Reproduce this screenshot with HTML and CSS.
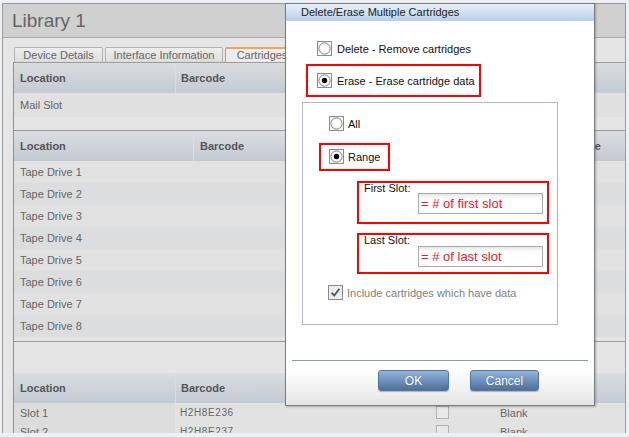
FILE: index.html
```html
<!DOCTYPE html>
<html lang="en">
<head>
    <meta charset="UTF-8">
    <title>Library 1</title>
    <link rel="stylesheet" href="styles.css">
</head>
<body>
    <div class="page">
        <div class="title">Library 1</div>
        <div class="content">
            <div class="tabs">
                <div class="tab tab-device">Device Details</div>
                <div class="tab tab-iface">Interface Information</div>
                <div class="tab tab-cart active">Cartridges</div>
            </div>
            <div class="panel">
                <div class="grid mail">
                    <div class="row head">
                        <div class="cell loc">Location</div>
                        <div class="cell code">Barcode</div>
                    </div>
                    <div class="row mail-row">
                        <div class="cell loc">Mail Slot</div>
                    </div>
                </div>

                <div class="grid drives">
                    <div class="row head">
                        <div class="cell loc">Location</div>
                        <div class="cell code">Barcode</div>
                        <div class="cell state">State</div>
                    </div>
                    <div class="row"><div class="cell loc">Tape Drive 1</div></div>
                    <div class="row"><div class="cell loc">Tape Drive 2</div></div>
                    <div class="row"><div class="cell loc">Tape Drive 3</div></div>
                    <div class="row"><div class="cell loc">Tape Drive 4</div></div>
                    <div class="row"><div class="cell loc">Tape Drive 5</div></div>
                    <div class="row"><div class="cell loc">Tape Drive 6</div></div>
                    <div class="row"><div class="cell loc">Tape Drive 7</div></div>
                    <div class="row"><div class="cell loc">Tape Drive 8</div></div>
                </div>

                <div class="grid slots">
                    <div class="row head">
                        <div class="cell loc">Location</div>
                        <div class="cell code">Barcode</div>
                    </div>
                    <div class="row">
                        <div class="cell loc">Slot 1</div>
                        <div class="cell code mono">H2H8E236</div>
                        <div class="cell pick"><span class="box"></span></div>
                        <div class="cell kind">Blank</div>
                    </div>
                    <div class="row">
                        <div class="cell loc">Slot 2</div>
                        <div class="cell code mono">H2H8E237</div>
                        <div class="cell pick"><span class="box"></span></div>
                        <div class="cell kind">Blank</div>
                    </div>
                </div>
            </div>
        </div>
    </div>

    <div class="dialog">
        <div class="dialog-title">Delete/Erase Multiple Cartridges</div>
        <div class="dialog-body">
            <div class="option opt-delete">
                <svg class="radio" width="15" height="15" viewBox="0 0 15 15"><rect x="0.5" y="0.5" width="14" height="14" fill="#fff" stroke="#8c8c8c"/><circle cx="7.5" cy="7.5" r="5.6" fill="#fff" stroke="#7d7d7d"/></svg>
                <span>Delete - Remove cartridges</span>
            </div>
            <div class="mark opt-erase">
                <div class="option">
                    <svg class="radio" width="15" height="15" viewBox="0 0 15 15"><rect x="0.5" y="0.5" width="14" height="14" fill="#fff" stroke="#8c8c8c"/><circle cx="7.5" cy="7.5" r="5.6" fill="#fff" stroke="#7d7d7d"/><circle cx="7.5" cy="7.5" r="2.7" fill="#000"/></svg>
                    <span>Erase - Erase cartridge data</span>
                </div>
            </div>

            <div class="group">
                <div class="option opt-all">
                    <svg class="radio" width="15" height="15" viewBox="0 0 15 15"><rect x="0.5" y="0.5" width="14" height="14" fill="#fff" stroke="#8c8c8c"/><circle cx="7.5" cy="7.5" r="5.6" fill="#fff" stroke="#7d7d7d"/></svg>
                    <span>All</span>
                </div>
                <div class="mark opt-range">
                    <div class="option">
                        <svg class="radio" width="15" height="15" viewBox="0 0 15 15"><rect x="0.5" y="0.5" width="14" height="14" fill="#fff" stroke="#8c8c8c"/><circle cx="7.5" cy="7.5" r="5.6" fill="#fff" stroke="#7d7d7d"/><circle cx="7.5" cy="7.5" r="2.7" fill="#000"/></svg>
                        <span>Range</span>
                    </div>
                </div>
                <div class="mark slot-box first">
                    <div class="slot-label">First Slot:</div>
                    <div class="slot-input">= # of first slot</div>
                </div>
                <div class="mark slot-box last">
                    <div class="slot-label">Last Slot:</div>
                    <div class="slot-input">= # of last slot</div>
                </div>
                <div class="option opt-include">
                    <svg class="check" width="15" height="15" viewBox="0 0 15 15"><rect x="0.5" y="0.5" width="14" height="14" fill="#ececec" stroke="#8a8a8a"/><path d="M3.6 7.6 L6.2 10.6 L11.4 3.8" fill="none" stroke="#4d5866" stroke-width="1.8"/></svg>
                    <span>Include cartridges which have data</span>
                </div>
            </div>
        </div>
        <div class="dialog-sep"></div>
        <div class="dialog-foot">
            <button class="btn btn-ok">OK</button>
            <button class="btn btn-cancel">Cancel</button>
        </div>
    </div>
</body>
</html>
```

FILE: styles.css
```css
body {
    margin: 0;
    background-color: #edf1f6;
    font-family: "Liberation Sans", Arial, sans-serif;
    font-size: 11px;
    color: #666;
}

.page {
    width: 624px;
    height: 430px;
    margin: 3px 0 0 2px;
    border: 1px solid #9b9b9b;
    border-bottom: none;
    box-sizing: border-box;
    background-color: #e5e5e5;
    overflow: hidden;
}

.title {
    height: 34px;
    box-sizing: border-box;
    border-bottom: 1px solid #a9a9a9;
    background-color: #d0d0d0;
    padding-left: 9px;
    font-size: 19px;
    line-height: 33px;
    color: #666;
}

.content {
    padding: 9px 0 0 10px;
}

.tabs {
    display: flex;
    gap: 2px;
    height: 15px;
    padding-left: 1px;
}

.tab {
    box-sizing: border-box;
    height: 15px;
    border: 1px solid #b3b3b3;
    border-bottom: none;
    border-radius: 2px 2px 0 0;
    background: linear-gradient(#eeeeee, #dcdcdc);
    text-align: center;
    line-height: 14px;
    color: #666;
}

.tab-device {
    width: 89px;
}

.tab-iface {
    width: 118px;
}

.tab-cart {
    width: 74px;
}

.tab.active {
    border-top: 2px solid #f1a55a;
    border-left-color: #8aa6c8;
    background: #ececec;
    line-height: 12px;
}

.panel {
    border-left: 1px solid #8f8f8f;
    border-top: 1px solid #9a9a9a;
}

.row {
    display: flex;
    align-items: center;
    height: 22px;
}

.cell {
    box-sizing: border-box;
    padding-left: 6px;
    white-space: nowrap;
}

.head {
    height: 30px;
    background: linear-gradient(#dadde0, #c3cad2);
    font-weight: bold;
    color: #555;
}

.head .cell {
    height: 100%;
    display: flex;
    align-items: center;
}

.head .code {
    border-left: 1px solid #d9dde1;
}

.mail {
    height: 67px;
}

.mail .loc,
.slots .loc {
    width: 161px;
}

.mail .code,
.slots .code {
    padding-left: 5px;
}

.mail-row {
    height: 24px;
    background-color: #e0e0e0;
}

.drives {
    border-top: 1px solid #9a9a9a;
    border-bottom: 1px solid #9a9a9a;
    padding-bottom: 4px;
}

.drives .row:nth-child(even) {
    background-color: #e1e1e1;
}

.drives .row:nth-child(odd) {
    background-color: #dcdddf;
}

.drives .row.head {
    background: linear-gradient(#dadde0, #c3cad2);
}

.drives .loc {
    width: 179px;
}

.drives .code {
    width: 375px;
}

.slots {
    margin-top: 31px;
}

.slots .row {
    height: 19px;
    background-color: #e2e2e2;
}

.slots .row.head {
    height: 30px;
    background: linear-gradient(#dadde0, #c3cad2);
}

.slots .row .loc {
    height: 100%;
    display: flex;
    align-items: center;
}

.slots .row:not(.head) .loc {
    background-color: #dcdcdc;
}

.slots .code.mono {
    width: 255px;
    font-size: 10px;
    letter-spacing: 0.6px;
}

.pick {
    width: 60px;
    padding-left: 6px;
}

.box {
    display: block;
    width: 13px;
    height: 13px;
    box-sizing: border-box;
    border: 1px solid #b3b3b3;
    background-color: #e9e9e9;
}

.kind {
    padding-left: 10px;
}

.dialog {
    position: absolute;
    left: 285px;
    top: 3px;
    width: 310px;
    height: 403px;
    box-sizing: border-box;
    border: 1px solid #7c7c7c;
    background-color: #fff;
    display: flex;
    flex-direction: column;
    box-shadow: 1px 1px 2px rgba(0, 0, 0, 0.25);
    color: #111;
}

.dialog-title {
    height: 17px;
    line-height: 17px;
    padding-left: 15px;
    background: linear-gradient(#e9f0f8, #b7cfe9);
    color: #222;
}

.dialog-body {
    flex: 1;
    padding-top: 20px;
}

.option {
    display: flex;
    align-items: center;
    gap: 5px;
    height: 15px;
}

.radio,
.check {
    display: block;
    flex: none;
}

.opt-delete {
    margin-left: 31px;
}

.mark {
    box-sizing: border-box;
    border: 2px solid #ff0000;
}

.opt-erase {
    width: 175px;
    height: 33px;
    margin: 8px 0 0 20px;
    padding: 7px 0 0 9px;
}

.group {
    box-sizing: border-box;
    width: 256px;
    height: 223px;
    margin: 5px 0 0 16px;
    border: 1px solid #b8b6ca;
}

.group .option {
    gap: 4px;
}

.opt-all {
    margin: 13px 0 0 26px;
}

.opt-range {
    width: 71px;
    height: 28px;
    margin: 12px 0 0 16px;
    padding: 4px 0 0 8px;
}

.slot-box {
    width: 192px;
    margin-left: 54px;
}

.slot-box.first {
    height: 43px;
    margin-top: 10px;
}

.slot-box.last {
    height: 41px;
    margin-top: 9px;
}

.slot-label {
    padding-left: 5px;
    line-height: 10px;
    height: 10px;
    color: #111;
}

.slot-box.last .slot-input {
    margin-top: 1px;
}

.slot-input {
    box-sizing: border-box;
    width: 125px;
    height: 21px;
    margin-left: 59px;
    padding-left: 2px;
    border: 1px solid #a9a9a9;
    background: linear-gradient(#e6e6e6, #ffffff 5px);
    font-size: 13px;
    line-height: 19px;
    color: #f5141e;
}

.opt-include {
    margin: 11px 0 0 25px;
    color: #808080;
}

.dialog-sep {
    height: 1px;
    margin: 0 6px;
    background-color: #7f9ec0;
}

.dialog-foot {
    height: 44px;
    box-sizing: border-box;
    padding: 9px 0 0 92px;
    display: flex;
    gap: 21px;
    align-items: flex-start;
    background: linear-gradient(#ffffff, #ffffff 20%, #e4e4e4);
}

.btn {
    height: 21px;
    border: 1px solid #54769e;
    border-radius: 3px;
    background: linear-gradient(#94b3d8, #6e92bd 50%, #4d6f99);
    box-shadow: 0 1px 1px rgba(0, 0, 0, 0.25);
    color: #fff;
    font-family: "Liberation Sans", Arial, sans-serif;
    font-size: 12px;
    text-shadow: 0 0 1px rgba(0, 0, 0, 0.3);
    padding: 0;
}

.btn-ok {
    width: 71px;
}

.btn-cancel {
    width: 69px;
}
```
